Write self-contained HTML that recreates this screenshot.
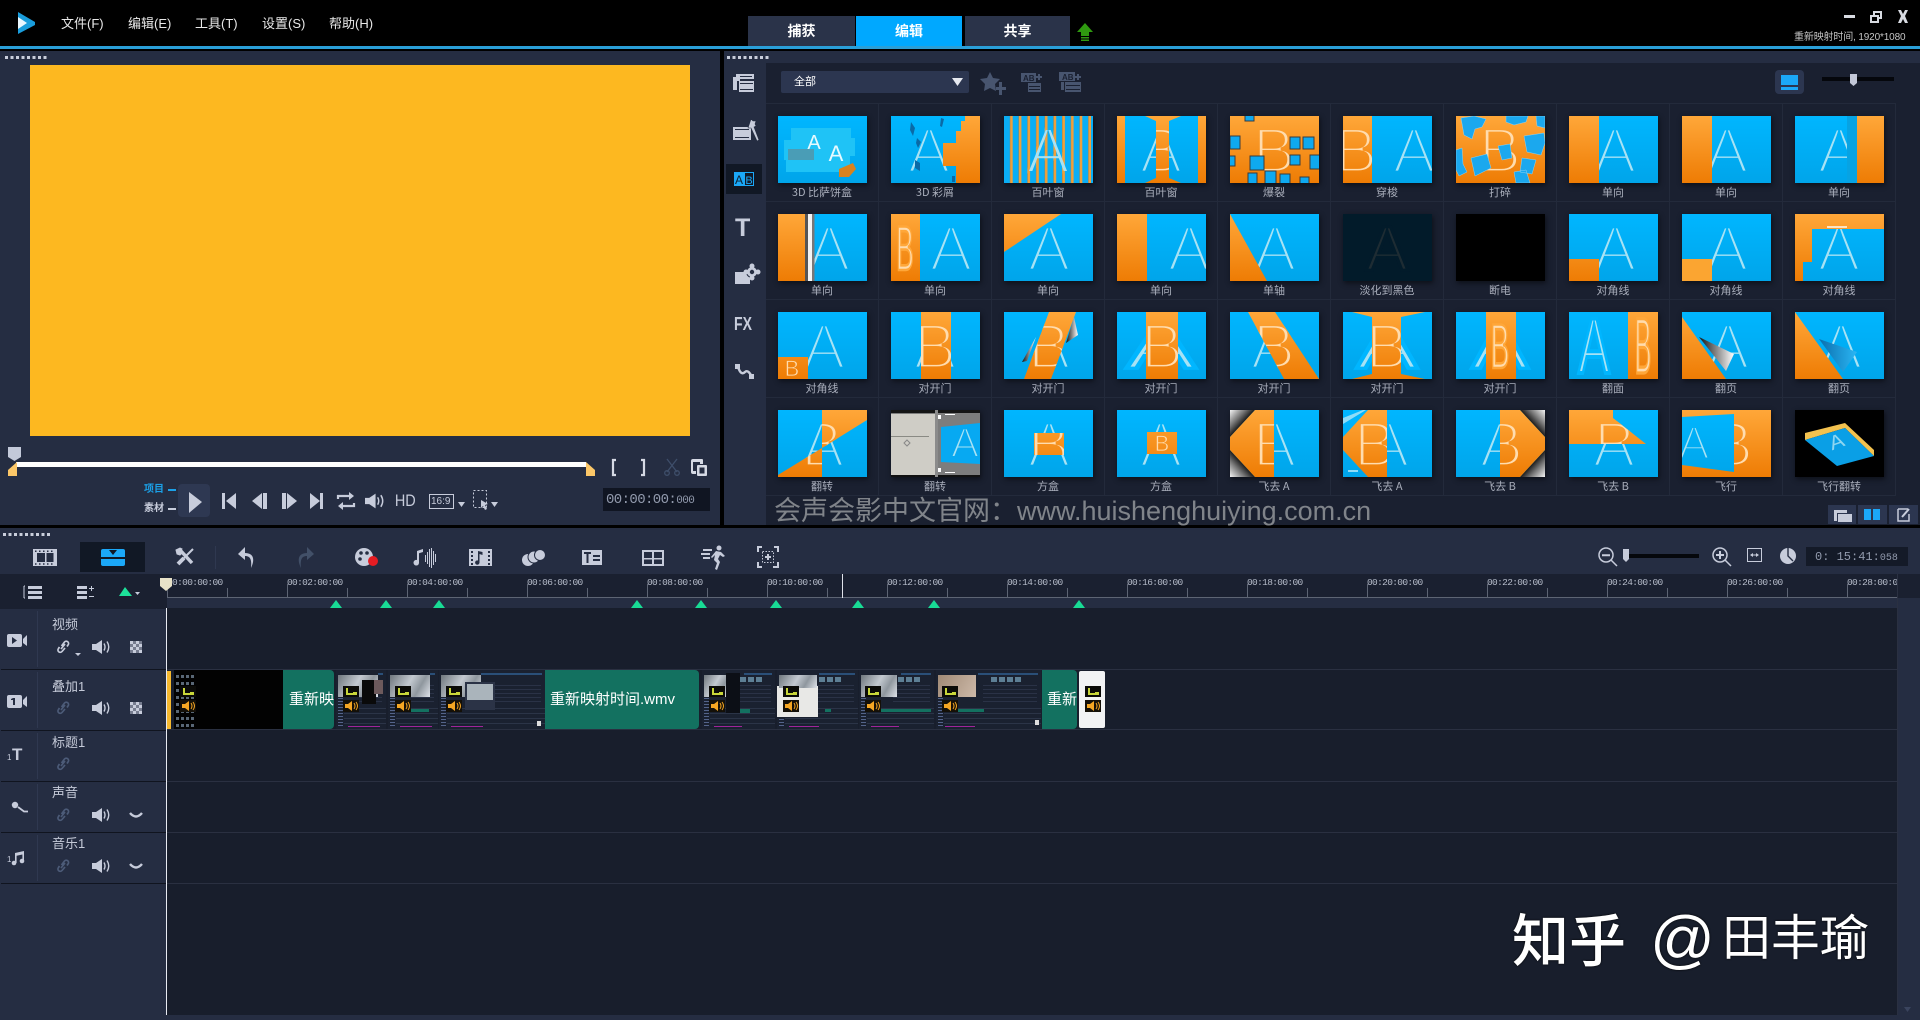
<!DOCTYPE html>
<html lang="zh"><head><meta charset="utf-8"><title>会声会影</title>
<style>
html,body{margin:0;padding:0;width:1920px;height:1020px;overflow:hidden;background:#000}
body{position:relative;font-family:"Liberation Sans","Noto Sans CJK SC",sans-serif;color:#c7ccdb}
div,span,p{position:absolute;margin:0;white-space:nowrap}
.p{background:#252d42}
.tab{top:16px;height:30px;line-height:30px;text-align:center;color:#fff;font-size:14px;font-weight:700;background:#2a3349}
.m{top:15px;font-size:13px;line-height:18px;color:#e8e8e8}
.dots{height:3px;background:repeating-linear-gradient(90deg,#c9cedb 0 3px,transparent 3px 5.5px)}
#grid{left:766px;top:103px;width:1130px;display:grid;grid-template-columns:repeat(10,113px);grid-auto-rows:98px;border-top:1px solid #232a3b}
.c{position:relative;border-right:1px solid #232a3b;border-bottom:1px solid #232a3b;box-sizing:border-box}
.c svg{position:absolute;left:12px;top:12px;width:89px;height:67px;box-shadow:1px 2px 5px #0c0f17}
.c p{left:0;right:0;top:81px;text-align:center;font:11px/14px "WenQuanYi Zen Hei","Noto Sans CJK SC",sans-serif;color:#a9aebb}
.B,.O{width:89px;height:67px}
.B{fill:url(#gb)}.O{fill:url(#go)}
.a,.b{font:63px "Liberation Sans",sans-serif;text-anchor:middle;stroke-width:3.2}
.a{fill:#a8e2f4;stroke:url(#gb)}
.b{fill:#ffdcae;stroke:url(#go)}
.q{fill:#0ea9f0;stroke:#3b3b3b;stroke-width:1}
.sh{fill:#1ba8ee;stroke:#8fd3f2;stroke-width:.5}
.tk{font:9.5px "Liberation Mono",monospace;letter-spacing:-.65px;color:#b4bac8;top:3px}
.h{left:1px;width:165px;background:#252d42;border-bottom:1px solid #10141f;box-sizing:border-box}
.h i{position:absolute;left:36px;top:2px;bottom:2px;width:1px;background:#2f3850}
.n{font-size:13px;line-height:16px;color:#c5cad8;left:52px}
.sep{left:167px;width:1730px;height:1px;background:#2a3041}
.s{top:670px;height:59px;background:#1a2130;overflow:hidden}
.s b{position:absolute;display:block}
.ph{left:2px;top:5px;width:40px;height:22px;background:linear-gradient(120deg,#6f777d,#c3c9d0 45%,#8f979e 70%,#dfe3ea)}
.ui{left:42px;top:3px;right:3px;height:2px;background:#2a4f78}
.pu{left:12px;top:56px;width:32px;height:1px;background:#a0249a}
.cb{left:7px;top:16px}
.lp{left:2px;top:28px;width:5px;height:28px;background:repeating-linear-gradient(0deg,#54648a 0 1px,transparent 1px 3px)}
.tl{left:8px;top:36px;right:0;height:18px;background:repeating-linear-gradient(0deg,#2b3447 0 1px,transparent 1px 5px)}
.tp{left:52%;top:7px;width:30%;height:5px;background:repeating-linear-gradient(90deg,#5d7f95 0 6px,transparent 6px 8px)}
.rp{left:45%;top:14px;right:4px;height:18px;background:repeating-linear-gradient(0deg,#2a3246 0 1px,transparent 1px 4px)}
.g{top:670px;height:59px;background:#137160;color:#fff;font-size:15px;line-height:59px;border-radius:0 4px 4px 0;overflow:hidden}
.lc{font-family:"Liberation Mono",monospace;color:#929aad}
</style></head><body>
<svg width="0" height="0" style="position:absolute"><defs>
<linearGradient id="gb" gradientUnits="userSpaceOnUse" x1="0" y1="0" x2="0" y2="67"><stop offset="0" stop-color="#00b6ff"/><stop offset="1" stop-color="#00a5ea"/></linearGradient>
<linearGradient id="go" gradientUnits="userSpaceOnUse" x1="0" y1="0" x2="0" y2="67"><stop offset="0" stop-color="#ffa739"/><stop offset="1" stop-color="#ee7c04"/></linearGradient>
<linearGradient id="fold" x1="0" y1="0" x2="1" y2="0"><stop offset="0" stop-color="#111"/><stop offset="1" stop-color="#fff"/></linearGradient>
<linearGradient id="fb" x1="0" y1="0" x2="1" y2="0"><stop offset="0" stop-color="#0a6fae"/><stop offset="1" stop-color="#2bb6f4"/></linearGradient>
<linearGradient id="gc" x1="0" y1="0" x2=".55" y2=".55"><stop offset="0" stop-color="#f4f4f4"/><stop offset=".55" stop-color="#777"/><stop offset="1" stop-color="#050505"/></linearGradient>
<pattern id="st" patternUnits="userSpaceOnUse" width="8.7" height="67"><rect width="6" height="67" fill="#0aaef5"/><rect x="6" width="2.7" height="67" fill="#f0a03a"/></pattern>
<clipPath id="L30"><rect width="30" height="67"/></clipPath>
<clipPath id="M30"><rect x="30" width="30" height="67"/></clipPath>
<clipPath id="R59"><rect x="59" width="30" height="67"/></clipPath>
<symbol id="spk" viewBox="0 0 18 14"><path d="M0 4h4l6-4v14l-6-4H0z"/><path d="M12 3.500q2 3.500 0 7M15 1.500q3.500 5.500 0 11" fill="none" stroke="currentColor" stroke-width="1.400"/></symbol>
<symbol id="lnk" viewBox="0 0 14 14"><path d="M5 9l4-5M3.500 7l-1 1.500a2.200 2.200 0 0 0 3.500 3L9 8M5.500 6L8.500 2a2.200 2.200 0 0 1 3.500 3l-1 1.500" fill="none" stroke="currentColor" stroke-width="1.700"/></symbol>
<symbol id="chk" viewBox="0 0 12 12"><path d="M0 0h3v3H0zM6 0h3v3H6zM3 3h3v3H3zM9 3h3v3H9zM0 6h3v3H0zM6 6h3v3H6zM3 9h3v3H3zM9 9h3v3H9z"/><path opacity=".5" d="M3 0h3v3H3zM9 0h3v3H9zM0 3h3v3H0zM6 3h3v3H6zM3 6h3v3H3zM9 6h3v3H9zM0 9h3v3H0zM6 9h3v3H6z"/></symbol>
<symbol id="cbx" viewBox="0 0 16 27"><rect width="16" height="11" fill="#0b0b08"/><rect y="14" width="16" height="12" fill="#141008"/><path d="M3 2h2v5h6v2H3zM10 6h4v3h-4z" fill="#c8d63a"/><path d="M2 18h3l4-3v10l-4-3H2z" fill="#f5a623"/><path d="M11 17q2 3 0 6M13 16q3 4 0 8" fill="none" stroke="#f5a623"/></symbol>
</defs></svg>

<!-- top bar -->
<svg style="position:absolute;left:18px;top:12px" width="18" height="22"><path d="M0 0l17 10v3L0 22z" fill="#1a9ddc"/><path d="M0 5l9 6-9 6z" fill="#eaf7ff"/></svg>
<span class="m" style="left:61px">文件(F)</span><span class="m" style="left:128px">编辑(E)</span><span class="m" style="left:195px">工具(T)</span><span class="m" style="left:262px">设置(S)</span><span class="m" style="left:329px">帮助(H)</span>
<div class="tab" style="left:748px;width:107px">捕获</div>
<div class="tab" style="left:856px;width:106px;background:#00a8ff">编辑</div>
<div class="tab" style="left:965px;width:105px">共享</div>
<svg style="position:absolute;left:1076px;top:23px" width="18" height="18"><path d="M9 0l8 9h-4v4H5V9H1z" fill="#2f9a10"/><path d="M5 14h8v1.500H5zM5 16.500h8V18H5z" fill="#2f9a10"/></svg>
<svg style="position:absolute;left:1844px;top:8px" width="68" height="16" fill="#d8dbe2"><rect x="0" y="7" width="11" height="3"/><path d="M29 3h9v8h-3v4h-9V7h3zM31 5v2h4v2h1V5zM28 9v4h5V9z" fill-rule="evenodd"/><path d="M54 2h3l2 4 2-4h3l-3 6 3 7h-3l-2-4-2 4h-3l3-7z"/></svg>
<span style="left:1794px;top:31px;font-size:10px;line-height:14px;letter-spacing:-.15px;color:#c4c4c4">重新映射时间, 1920*1080</span>
<div style="left:0;top:46px;width:1920px;height:2.500px;background:#2a9fd8"></div>

<!-- preview panel -->
<div class="p" style="left:0;top:51px;width:720px;height:474px"></div>
<div class="dots" style="left:5px;top:56px;width:44px"></div>
<div style="left:30px;top:65px;width:660px;height:371px;background:#fdb820"></div>
<div style="left:16px;top:462px;width:570px;height:5px;background:#fff"></div>
<svg style="position:absolute;left:0;top:440px" width="720" height="85">
<path d="M8 7h13v10l-6.500 4L8 17z" fill="#c3c9d9"/>
<path d="M17 22v14H8v-6zM586 22v14h9v-6z" fill="#fcc768"/>
<g fill="none" stroke="#d5d9e4" stroke-width="2.200"><path d="M616 20h-3v15h3M641 20h3v15h-3"/></g>
<g stroke="#3e4e6a" stroke-width="1.300" fill="none"><path d="M667 19l10 13M677 19l-10 13"/><circle cx="667" cy="33" r="2.300"/><circle cx="677" cy="33" r="2.300"/></g>
<path d="M693 19h9a1 1 0 0 1 1 1v4h-3v-2h-7v9h3v3h-3a2 2 0 0 1-2-2V21a2 2 0 0 1 2-2z" fill="#d5d9e4"/><rect x="697" y="25" width="10" height="11" rx="1" fill="#d5d9e4"/><rect x="699.500" y="27.500" width="5" height="6" fill="#252d42"/>
<rect x="168" y="49" width="8" height="2" fill="#1ba1e8"/><rect x="168" y="68" width="8" height="2" fill="#c7ccdb"/>
<rect x="178" y="44" width="32" height="33" rx="4" fill="#2e3852"/>
<path d="M189 52l13 10-13 11z" fill="#c7ccdb"/>
<g fill="#c7ccdb"><path d="M222 53h3v16h-3zM236 53v16l-10-8zM252 61l10-8v16zM263 53h4v16h-4zM282 53h4v16h-4zM287 53l10 8-10 8zM310 53l10 8-10 8zM320 53h3v16h-3z"/></g>
<g fill="none" stroke="#c7ccdb" stroke-width="2.200"><path d="M338 59v-3h12M354 63v3h-12"/></g><path d="M349 52l5 4-5 4zM343 62l-5 4 5 4z" fill="#c7ccdb"/>
<use href="#spk" x="365" y="53" width="19" height="16" fill="#c7ccdb" color="#c7ccdb"/>
<rect x="429.500" y="54.500" width="24" height="14" fill="none" stroke="#c7ccdb"/>
<path d="M458 62h7l-3.500 5zM491 62h7l-3.500 5z" fill="#c7ccdb"/>
<rect x="473.500" y="50.500" width="13" height="17" fill="none" stroke="#c7ccdb" stroke-dasharray="2 2"/><path d="M481 60l7 4-3 1 2 4-2 1-2-4-2 2z" fill="#c7ccdb"/>
<path d="M703 52l5 6h-10zM703 71l5-6h-10z" fill="#d5d9e4"/>
</svg>
<span style="left:144px;top:483px;font-size:10px;line-height:14px;font-weight:700;color:#1ba1e8">项目</span>
<span style="left:144px;top:502px;font-size:10px;line-height:14px;font-weight:700;color:#c7ccdb">素材</span>
<span style="left:393px;top:491px;font-size:17px;line-height:20px;color:#c7ccdb;transform:scaleX(.85)">HD</span>
<span style="left:431px;top:495px;font-size:10px;line-height:13px;color:#c7ccdb">16:9</span>
<div style="left:603px;top:488px;width:107px;height:23px;background:#101522"></div>
<span class="lc" style="left:606px;top:491px;font-size:14px;line-height:18px;letter-spacing:-.6px">00:00:00:<span style="position:static;font-size:11px">000</span></span>

<!-- library panel -->
<div class="p" style="left:724px;top:51px;width:1196px;height:474px"></div>
<div style="left:766px;top:63px;width:1154px;height:462px;background:#1a2030"></div>
<div class="dots" style="left:727px;top:56px;width:44px"></div>
<div style="left:781px;top:71px;width:188px;height:22px;background:#2c3650;border-radius:2px"></div>
<span style="left:794px;top:75px;font-size:11px;line-height:14px;color:#fff">全部</span>
<svg style="position:absolute;left:724px;top:63px" width="1196" height="40">
<path d="M228 15h11l-5.500 8z" fill="#e6e9f0"/>
<g fill="#48556f" transform="translate(-4 4)"><path d="M270 5l3 6 7 1-5 5 1 7-6-3-6 3 1-7-5-5 7-1z"/><path d="M276 20h3v-5h3v5h4v3h-4v5h-3v-5h-3z"/></g>
<g fill="#48556f"><rect x="297" y="10" width="15" height="9"/><rect x="304" y="20" width="13" height="9"/><path d="M314 11h2v2h2v2h-2v2h-2v-2h-2v-2h2z"/><rect x="335" y="9" width="16" height="9"/><rect x="337" y="19" width="3" height="8"/><rect x="341" y="19" width="16" height="10"/><path d="M353 11h2v2h2v2h-2v2h-2v-2h-2v-2h2z"/></g>
<g fill="#1a2030"><rect x="305" y="23" width="11" height="1"/><rect x="305" y="26" width="11" height="1"/><rect x="342" y="22" width="14" height="1"/><rect x="342" y="26" width="14" height="1"/></g>
<text x="299" y="18" font-family="Liberation Sans" font-size="8" font-weight="700" fill="#1a2030">AB</text><text x="338" y="17" font-family="Liberation Sans" font-size="8" font-weight="700" fill="#1a2030">AB</text>
<rect x="1051" y="7" width="29" height="24" rx="4" fill="#2c3650"/><rect x="1057" y="12" width="17" height="10" fill="#1ba8f8"/><rect x="1057" y="24" width="17" height="3" fill="#1ba8f8"/>
<rect x="1098" y="14" width="72" height="4" fill="#05070c"/><path d="M1126 11h7v9l-3.500 3-3.500-3z" fill="#c3c8d8"/>
<rect x="1181" y="40" width="7" height="122" fill="#2c3650"/>
</svg>
<svg style="position:absolute;left:724px;top:64px" width="42" height="330" fill="#c7ccdb">
<path d="M12 10h18v5H16v2h-3v9H9V13h3z"/><rect x="15" y="17" width="15" height="11"/><g fill="#252d42"><rect x="16" y="19" width="13" height="1"/><rect x="16" y="25" width="13" height="1"/><rect x="16" y="12" width="12" height="1"/></g>
<rect x="9" y="63" width="18" height="13"/><g fill="#252d42"><rect x="11" y="65" width="14" height="1"/><rect x="11" y="73" width="14" height="1"/></g><path d="M26 58l1-3 2 2 3 0-1 3 1 2-2 1 5 13-2 1-6-13-3 0 1-3z" stroke="#252d42" stroke-width=".6"/>
<rect x="2" y="100" width="36" height="30" fill="#111825"/><rect x="10" y="108" width="10" height="14" fill="#1ba8f8"/><rect x="20.500" y="108.500" width="9" height="13" fill="none" stroke="#1ba8f8"/>
<text x="15" y="120" text-anchor="middle" font-family="Liberation Sans" font-size="12" fill="#0c2030">A</text><text x="25" y="120" text-anchor="middle" font-family="Liberation Sans" font-size="11" fill="#1ba8f8">B</text>
<rect x="11" y="208" width="15" height="12"/><circle cx="28" cy="208" r="5.500" stroke="#252d42"/><g><circle cx="28" cy="202" r="2.500"/><circle cx="34" cy="208" r="2.500"/><circle cx="28" cy="214" r="2.500"/><circle cx="22" cy="208" r="2.500"/></g><circle cx="28" cy="208" r="2.200" fill="#252d42"/>
<path d="M14 303q3 9 7 5q3-3 7 5" fill="none" stroke="#c7ccdb" stroke-width="2.400"/><rect x="11" y="300" width="5" height="5"/><rect x="25" y="310" width="5" height="5"/>
</svg>
<span style="left:735px;top:215px;font-size:25px;line-height:26px;font-weight:700;color:#c7ccdb">T</span>
<span style="left:734px;top:314px;font-size:18px;line-height:20px;font-weight:700;color:#c7ccdb;transform:scaleX(.78);transform-origin:0 0">FX</span>

<div id="grid">
<div class="c"><svg viewBox="0 0 89 67"><rect class="B"/><path fill="#1fc3f6" d="M13 12h60v10h4v18h-5v16H8V44H6V24h7z"/><rect x="10" y="33" width="26" height="11" fill="#4a9db6"/><path fill="#d9821c" d="M61 53l14-6 3 6-7 8H61z"/><text x="36" y="33" style="font:20px 'Liberation Sans',sans-serif;fill:#e6faff;text-anchor:middle">A</text><text x="58" y="45" style="font:22px 'Liberation Sans',sans-serif;fill:#e6faff;text-anchor:middle">A</text></svg><p>3D 比萨饼盒</p></div>
<div class="c"><svg viewBox="0 0 89 67"><rect class="B"/><text class="a" x="38" y="56">A</text><clipPath id="c2"><path d="M74 0h15v67H65V50H52V27h13V15h5V5h4z"/></clipPath><g clip-path="url(#c2)"><rect class="O"/></g><path fill="#0a6aa6" d="M20 6l4 6-2 8-3-6zM50 2l3 1-2 8-2-1zM26 22l4 4-3 6-2-5zM24 44l5 3v8l-5-3zM61 60h3v6h-3z"/></svg><p>3D 彩屑</p></div>
<div class="c"><svg viewBox="0 0 89 67"><rect width="89" height="67" fill="url(#st)"/><text class="a" x="44" y="56" style="stroke:url(#st);stroke-width:2.500">A</text></svg><p>百叶窗</p></div>
<div class="c"><svg viewBox="0 0 89 67"><rect class="B"/><text class="a" x="44" y="56">A</text><clipPath id="c4"><path d="M0 0h8v67H0zM81 0h8v67h-8zM28 0h36L52 5v57l12 5H28l11-5V5z"/></clipPath><g clip-path="url(#c4)"><rect class="O"/><text class="b" x="44" y="56">B</text></g></svg><p>百叶窗</p></div>
<div class="c"><svg viewBox="0 0 89 67"><rect class="O"/><text class="b" x="44" y="56">B</text><rect class="q" x="15" y="-1" width="9" height="6"/><rect class="q" x="0" y="20" width="10" height="13"/><rect class="q" x="-1" y="40" width="6" height="10"/><rect class="q" x="20" y="40" width="14" height="14"/><rect class="q" x="60" y="21" width="10" height="12"/><rect class="q" x="73" y="21" width="11" height="12"/><rect class="q" x="60" y="39" width="10" height="10"/><rect class="q" x="80" y="39" width="10" height="14"/><rect class="q" x="18" y="57" width="9" height="11"/><rect class="q" x="35" y="55" width="11" height="13"/><rect class="q" x="50" y="58" width="10" height="10"/><rect class="q" x="70" y="61" width="9" height="7"/></svg><p>爆裂</p></div>
<div class="c"><svg viewBox="0 0 89 67"><rect class="B"/><text class="a" x="71" y="56">A</text><clipPath id="c6"><rect width="29" height="67"/></clipPath><g clip-path="url(#c6)"><rect class="O"/><text class="b" x="13" y="56">B</text></g></svg><p>穿梭</p></div>
<div class="c"><svg viewBox="0 0 89 67"><rect class="O"/><text class="b" x="44" y="56">B</text><path class="sh" d="M5 2l13-2 12 3-4 8-7 2-3 10-8-4zM50 0h22l-2 6-12 3-8-3zM68 20l20-3 1 10-4 12-14-3zM0 34l6-2 1 16 4 8-8 4-3-6zM15 42l16-4 4 14-16 8zM66 42l14 2-4 14-12-2zM58 56l12-2 4 13H60zM42 30l12-2 2 14-10 2zM80 0h9v12l-8-2z"/></svg><p>打碎</p></div>
<div class="c"><svg viewBox="0 0 89 67"><rect class="B"/><text class="a" x="46" y="56">A</text><rect class="O" style="width:30px"/></svg><p>单向</p></div>
<div class="c"><svg viewBox="0 0 89 67"><rect class="B"/><text class="a" x="45" y="56">A</text><rect class="O" style="width:30px"/></svg><p>单向</p></div>
<div class="c"><svg viewBox="0 0 89 67"><rect class="B"/><text class="a" x="44" y="56">A</text><rect x="52" width="10" height="67" fill="#07a3e3"/><rect class="O" x="62" style="width:27px"/></svg><p>单向</p></div>

<div class="c"><svg viewBox="0 0 89 67"><rect class="B"/><text class="a" x="51" y="56">A</text><rect class="O" style="width:27px"/><rect x="27" width="3" height="67" fill="#555"/><rect x="30" width="4" height="67" fill="#f4f4f4"/><rect x="34" width="2.500" height="67" fill="#777"/></svg><p>单向</p></div>
<div class="c"><svg viewBox="0 0 89 67"><rect class="B"/><text class="a" x="60" y="56">A</text><rect class="O" style="width:29px"/><text class="b" transform="translate(14 56) scale(.42 1)" style="stroke-width:2.600">B</text></svg><p>单向</p></div>
<div class="c"><svg viewBox="0 0 89 67"><rect class="B"/><text class="a" x="45" y="56">A</text><path class="O" d="M0 0h57L0 38z"/></svg><p>单向</p></div>
<div class="c"><svg viewBox="0 0 89 67"><rect class="B"/><text class="a" x="72" y="56">A</text><rect class="O" style="width:30px"/></svg><p>单向</p></div>
<div class="c"><svg viewBox="0 0 89 67"><rect class="B"/><text class="a" x="45" y="56">A</text><path class="O" d="M0 0l37 67H0z"/></svg><p>单轴</p></div>
<div class="c"><svg viewBox="0 0 89 67"><rect width="89" height="67" fill="#021b2a"/><text class="a" x="44" y="56" style="fill:#1e2c33;stroke:#021b2a">A</text></svg><p>淡化到黑色</p></div>
<div class="c"><svg viewBox="0 0 89 67"><rect width="89" height="67" fill="#000"/></svg><p>断电</p></div>
<div class="c"><svg viewBox="0 0 89 67"><rect class="B"/><text class="a" x="46" y="56">A</text><rect class="O" y="45" style="width:30px;height:22px"/></svg><p>对角线</p></div>
<div class="c"><svg viewBox="0 0 89 67"><rect class="B"/><text class="a" x="45" y="56">A</text><rect x="0" y="45" width="30" height="22" fill="#fba531"/></svg><p>对角线</p></div>
<div class="c"><svg viewBox="0 0 89 67"><rect class="B"/><text class="a" x="44" y="56">A</text><path class="O" d="M0 0h89v15H17v33H8v19H0z"/><rect x="32" y="12" width="20" height="2" fill="#ffe3c0"/></svg><p>对角线</p></div>

<div class="c"><svg viewBox="0 0 89 67"><rect class="B"/><text class="a" x="46" y="56">A</text><rect class="O" y="45" style="width:30px;height:22px"/><text class="b" x="14" y="64" style="font-size:22px;stroke-width:.7">B</text></svg><p>对角线</p></div>
<div class="c"><svg viewBox="0 0 89 67"><rect class="B"/><text class="a" x="44" y="56">A</text><g clip-path="url(#M30)"><rect class="O"/><text class="b" x="44" y="56">B</text></g></svg><p>对开门</p></div>
<div class="c"><svg viewBox="0 0 89 67"><rect class="B"/><text class="a" x="45" y="56">A</text><clipPath id="c23"><path d="M45 0h27L47 67H20z"/></clipPath><g clip-path="url(#c23)"><rect class="O"/><text class="b" x="45" y="56">B</text></g><path d="M18 50l14-25-9 24z" fill="url(#fold)"/><path d="M70 5l4 18-12 8z" fill="url(#fold)"/></svg><p>对开门</p></div>
<div class="c"><svg viewBox="0 0 89 67"><rect class="B"/><text class="a" transform="translate(44 56) scale(1.650 1)">A</text><clipPath id="c24"><rect x="29" width="32" height="67"/></clipPath><g clip-path="url(#c24)"><rect class="O"/><text class="b" x="45" y="56">B</text></g></svg><p>对开门</p></div>
<div class="c"><svg viewBox="0 0 89 67"><rect class="B"/><text class="a" x="42" y="56">A</text><clipPath id="c25"><path d="M18 0h27l44 67H54z"/></clipPath><g clip-path="url(#c25)"><rect class="O"/><text class="b" x="44" y="56">B</text></g></svg><p>对开门</p></div>
<div class="c"><svg viewBox="0 0 89 67"><rect class="B"/><text class="a" transform="translate(44 56) scale(1.450 1)">A</text><clipPath id="c26"><path d="M9 0h73L58 5v57l24 5H9l20-5V5z"/></clipPath><g clip-path="url(#c26)"><rect class="O"/><text class="b" x="44" y="56">B</text></g></svg><p>对开门</p></div>
<div class="c"><svg viewBox="0 0 89 67"><rect class="B"/><text class="a" transform="translate(44 56) scale(1.350 1)">A</text><rect class="O" x="30" style="width:30px"/><text class="b" transform="translate(44 56) scale(.45 1)" style="stroke-width:2.600">B</text></svg><p>对开门</p></div>
<div class="c"><svg viewBox="0 0 89 67"><rect class="B"/><text class="a" transform="translate(25 61) scale(.75 1.250)">A</text><g clip-path="url(#R59)"><rect class="O"/><text class="b" transform="translate(74 61) scale(.4 1.250)" style="stroke-width:2.600">B</text></g></svg><p>翻面</p></div>
<div class="c"><svg viewBox="0 0 89 67"><rect class="B"/><text class="a" x="46" y="56">A</text><path class="O" d="M0 5l44 62H0z"/><path d="M17 25l35 17-8 17z" fill="url(#fold)"/></svg><p>翻页</p></div>
<div class="c"><svg viewBox="0 0 89 67"><rect class="B"/><text class="a" x="46" y="56">A</text><path class="O" d="M0 0l48 67H0z"/><path d="M24 27l38 13-14 20z" fill="url(#fb)"/></svg><p>翻页</p></div>

<div class="c"><svg viewBox="0 0 89 67"><rect class="B"/><text class="a" x="45" y="56">A</text><clipPath id="c31"><path d="M44 0h45v10L44 38V67H0V65L44 38z"/></clipPath><g clip-path="url(#c31)"><rect class="O"/><text class="b" x="44" y="56">B</text></g></svg><p>翻转</p></div>
<div class="c"><svg viewBox="0 0 89 67"><rect width="89" height="67" fill="#7d7d7d"/><rect width="89" height="3" fill="#151515"/><rect y="4" width="44" height="61" fill="#cfcdc6"/><rect y="65" width="89" height="2" fill="#111"/><rect y="26" width="38" height="1" fill="#8a8a84"/><path d="M16 30l3 3-3 3-3-3z" fill="none" stroke="#888"/><rect x="44" width="3" height="67" fill="#8b8b8b"/><path d="M50 17l39-4v41l-39-2z" fill="#07a9f2"/><text class="a" x="74" y="47" style="font-size:42px;stroke-width:2;stroke:#07a9f2">A</text><path d="M47 5h3v4h-3zM54 4h10v1H54zM47 58h3v4h-3zM54 62h10v1H54z" fill="#fff"/></svg><p>翻转</p></div>
<div class="c"><svg viewBox="0 0 89 67"><rect class="B"/><text class="a" x="45" y="56">A</text><clipPath id="c33"><rect x="30" y="23" width="30" height="22"/></clipPath><g clip-path="url(#c33)"><rect class="O"/><text class="b" x="45" y="56">B</text></g></svg><p>方盒</p></div>
<div class="c"><svg viewBox="0 0 89 67"><rect class="B"/><text class="a" x="44" y="56">A</text><rect class="O" x="30" y="22" style="width:30px;height:22px"/><text class="b" x="45" y="41" style="font-size:22px;stroke-width:.7">B</text></svg><p>方盒</p></div>
<div class="c"><svg viewBox="0 0 89 67"><rect class="B"/><text class="a" x="45" y="56">A</text><path d="M0 0h25L0 27z" fill="url(#gc)"/><path d="M0 0h25L0 27z" fill="url(#gc)" transform="translate(0 67) scale(1 -1)"/><clipPath id="c35"><path d="M25 0h19v67H25L0 40V27z"/></clipPath><g clip-path="url(#c35)"><rect class="O"/><text class="b" x="44" y="56">B</text></g></svg><p>飞去 A</p></div>
<div class="c"><svg viewBox="0 0 89 67"><rect class="B"/><text class="a" x="45" y="56">A</text><path d="M0 8l20-8h3L0 14zM5 60h10v2H5z" fill="#8fdcf7"/><clipPath id="c36"><path d="M25 0h19v67H25L0 40V27z"/></clipPath><g clip-path="url(#c36)"><rect class="O"/><text class="b" x="32" y="56">B</text></g></svg><p>飞去 A</p></div>
<div class="c"><svg viewBox="0 0 89 67"><rect class="B"/><text class="a" x="45" y="56">A</text><path d="M0 0h25L0 27z" fill="url(#gc)" transform="translate(89 0) scale(-1 1)"/><path d="M0 0h25L0 27z" fill="url(#gc)" transform="translate(89 67) scale(-1 -1)"/><clipPath id="c37"><path d="M44 0h20l25 27v13L64 67H44z"/></clipPath><g clip-path="url(#c37)"><rect class="O"/><text class="b" x="46" y="56">B</text></g></svg><p>飞去 B</p></div>
<div class="c"><svg viewBox="0 0 89 67"><rect class="B"/><text class="a" x="45" y="56">A</text><clipPath id="c38"><path d="M0 0h44v8l33 26H0z"/></clipPath><g clip-path="url(#c38)"><rect class="O"/><text class="b" x="46" y="56">B</text></g></svg><p>飞去 B</p></div>
<div class="c"><svg viewBox="0 0 89 67"><rect class="O"/><text class="b" x="50" y="56">B</text><path class="B" d="M0 7l52-3v58L0 55z"/><text class="a" x="12" y="49" style="font-size:46px;stroke-width:2.400">A</text></svg><p>飞行</p></div>
<div class="c"><svg viewBox="0 0 89 67"><rect width="89" height="67" fill="#000"/><path d="M10 23l40-10 29 27v6L50 18 10 30z" fill="#f3c24f"/><path d="M10 30l40-12 29 28-37 10z" fill="#0a9fe6"/><text x="44" y="42" transform="rotate(-20 44 38) scale(1 .9)" style="font:22px 'Liberation Sans',sans-serif;fill:#8fd6f0;text-anchor:middle">A</text></svg><p>飞行翻转</p></div>
</div>

<span style="left:774px;top:496px;height:30px;overflow:hidden;font-size:27px;line-height:30px;color:#80848a">会声会影中文官网：www.huishenghuiying.com.cn</span>
<div style="left:1828px;top:505px;width:28px;height:19px;background:#2c3650"></div>
<div style="left:1858px;top:505px;width:29px;height:19px;background:#2c3650"></div>
<div style="left:1889px;top:505px;width:29px;height:19px;background:#2c3650"></div>
<svg style="position:absolute;left:1828px;top:505px" width="92" height="20"><path d="M6 5h13v3H9v8H6z" fill="#c7ccdb"/><rect x="10" y="9" width="14" height="8" fill="#c7ccdb"/><rect x="36" y="4" width="7" height="11" fill="#1ba8f8"/><rect x="45" y="4" width="7" height="11" fill="#1ba8f8"/><path d="M70 4h10M70 4v12h11V9" fill="none" stroke="#c7ccdb" stroke-width="1.500"/><path d="M74 12l7-8" stroke="#c7ccdb" stroke-width="2"/></svg>

<!-- timeline panel -->
<div class="p" style="left:0;top:528px;width:1920px;height:492px"></div>
<div class="dots" style="left:3px;top:533px;width:47px"></div>
<div style="left:80px;top:542px;width:65px;height:30px;background:#111825"></div>
<svg style="position:absolute;left:0;top:540px" width="800" height="34" fill="#c7ccdb">
<path d="M33 9h24v17H33zM37 13v9h8V13zM46.500 13v9h7V13z" fill-rule="evenodd"/><g fill="#252d42"><path d="M35 10.500h1.500v1.500H35zM39 10.500h1.500v1.500H39zM43 10.500h1.500v1.500H43zM47 10.500h1.500v1.500H47zM51 10.500h1.500v1.500H51zM35 23.200h1.500v1.500H35zM39 23.200h1.500v1.500H39zM43 23.200h1.500v1.500H43zM47 23.200h1.500v1.500H47zM51 23.200h1.500v1.500H51z"/></g>
<rect x="101" y="9" width="24" height="17" rx="2" fill="#1ba8f8"/><rect x="101" y="17" width="24" height="2" fill="#111825"/><path d="M109 10h8l-4 5z" fill="#111825"/>
<g stroke="#c7ccdb" fill="none"><path d="M180 10l12 13" stroke-width="3.500"/><path d="M193 9l-9 9" stroke-width="2"/><path d="M184 18l-6 6" stroke-width="4"/><path d="M176 10l4-2 2 1-2 3 2 1-2 2-3-1z" stroke-width="1" fill="#c7ccdb"/></g>
<rect x="215" y="6" width="1" height="23" fill="#2f3850"/>
<path d="M245 7l-7 7 7 6v-4c5 0 7 3 6 12 4-8 3-15-6-15z"/>
<path d="M307 7l7 7-7 6v-4c-5 0-7 3-6 12-4-8-3-15 6-15z" fill="#425068"/>
<circle cx="364" cy="17" r="9"/><g fill="#252d42"><circle cx="361" cy="13" r="1.800"/><circle cx="367" cy="13" r="1.800"/><circle cx="360" cy="19" r="1.800"/></g><circle cx="373" cy="21" r="5" fill="#e51c23"/>
<path d="M417 20v-9l6-2v3l-4 1.300V22a2.800 2.800 0 1 1-2-2z"/><path d="M425 15h1v7h-1zM427 12h1v12h-1zM429 9h1v18h-1zM431 8h1v20h-1zM433 11h1v14h-1zM435 14h1v8h-1z"/>
<path d="M469 9h23v17h-23z"/><g fill="#252d42"><path d="M471 11h2v2h-2zM471 15h2v2h-2zM471 19h2v2h-2zM471 23h2v2h-2zM488 11h2v2h-2zM488 15h2v2h-2zM488 19h2v2h-2zM488 23h2v2h-2z"/><path d="M478 20.500a2.200 2.200 0 1 0 1.500 2V14l3 1v-3l-4.500-1z"/></g>
<circle cx="528" cy="20" r="6"/><circle cx="534" cy="17" r="6" stroke="#252d42"/><circle cx="540" cy="15" r="5.500" stroke="#252d42"/>
<rect x="582" y="10" width="20" height="15"/><path d="M584 12h7v2h-2.500v9h-2V14H584zM593 15h7v2h-7zM593 19h7v2h-7z" fill="#252d42"/>
<path d="M642 10h22v16h-22zM644 12v6h8v-6zM654 12v6h8v-6zM644 19.500v4.500h8v-4.500zM654 19.500v4.500h8v-4.500z" fill-rule="evenodd"/>
<path d="M703 9h9v2h-9zM701 13h9v2h-9zM703 17h7v2h-7z"/><circle cx="719" cy="8" r="2.500"/><path d="M716 11l5 1 4 4-2 1-3-2-2 4 2 3-3 8-2-1 2-6-3-3 1-5-3 3-1-1z"/>
<path d="M757 6h5v2h-3v4h-2zM779 6v6h-2V8h-3V6zM757 28v-6h2v4h3v2zM779 28h-6v-2h4v-4h2z"/><rect x="762.500" y="11.500" width="11" height="11" fill="none" stroke="#c7ccdb" stroke-dasharray="1.500 1.500"/><path d="M767 14h2v2h2v2h-2v2h-2v-2h-2v-2h2z"/>
</svg>
<svg style="position:absolute;left:1595px;top:545px" width="320" height="24"><g fill="none" stroke="#c7ccdb" stroke-width="1.500"><circle cx="11" cy="10" r="7"/><circle cx="125" cy="10" r="7"/><path d="M16 15l6 6M130 15l6 6"/></g><path d="M7 9.200h8v2H7zM121 9h8v2h-8zM124 6h2v8h-2z" fill="#c7ccdb"/><path d="M28 4h6v10l-3 3-3-3z" fill="#c7ccdb"/><rect x="34" y="9" width="70" height="4" fill="#05070c"/><rect x="152.500" y="3.500" width="14" height="13" fill="none" stroke="#c7ccdb"/><path d="M155 10l3-2v1.500h3V8l3 2-3 2v-1.500h-3V12z" fill="#c7ccdb"/><circle cx="193" cy="11" r="8" fill="#c7ccdb"/><path d="M193 3v8l5 5" fill="none" stroke="#252d42" stroke-width="1.400"/></svg>
<div style="left:1806px;top:547px;width:102px;height:19px;background:#141a28"></div>
<span class="lc" style="left:1815px;top:548px;font-size:12px;line-height:18px">0: 15:41:<span style="position:static;font-size:10px">058</span></span>

<!-- ruler -->
<div style="left:0;top:574px;width:1920px;height:24px;background:#1a2030"></div>
<div style="left:0;top:598px;width:167px;height:11px;background:#1a2030"></div>
<div id="r" style="left:167px;top:574px;width:1730px;height:24px;overflow:hidden">
<div style="left:0;right:0;bottom:1px;height:13px;background:repeating-linear-gradient(90deg,#5d6473 0 1px,transparent 1px 120px)"></div>
<div style="left:0;right:0;bottom:1px;height:9px;background:repeating-linear-gradient(90deg,transparent 0 60px,#5d6473 60px 61px,transparent 61px 120px)"></div>
<div style="left:0;right:0;bottom:0;height:1px;background:#5d6473"></div>
<span class="tk" style="left:0">00:00:00:00</span><span class="tk" style="left:120px">00:02:00:00</span><span class="tk" style="left:240px">00:04:00:00</span><span class="tk" style="left:360px">00:06:00:00</span><span class="tk" style="left:480px">00:08:00:00</span><span class="tk" style="left:600px">00:10:00:00</span><span class="tk" style="left:720px">00:12:00:00</span><span class="tk" style="left:840px">00:14:00:00</span><span class="tk" style="left:960px">00:16:00:00</span><span class="tk" style="left:1080px">00:18:00:00</span><span class="tk" style="left:1200px">00:20:00:00</span><span class="tk" style="left:1320px">00:22:00:00</span><span class="tk" style="left:1440px">00:24:00:00</span><span class="tk" style="left:1560px">00:26:00:00</span><span class="tk" style="left:1680px">00:28:00:00</span>
</div>
<div style="left:842px;top:574px;width:1px;height:24px;background:#dfe2ea"></div>
<svg style="position:absolute;left:0;top:574px" width="1100" height="36">
<g fill="#c7ccdb"><path d="M24 12v12M24 12h1M24 24h1" stroke="#c7ccdb" fill="none"/><rect x="28" y="12" width="14" height="3"/><rect x="28" y="17" width="14" height="3"/><rect x="28" y="22" width="14" height="3"/><rect x="77" y="12" width="10" height="3"/><rect x="77" y="17" width="10" height="3"/><rect x="77" y="22" width="10" height="3"/><path d="M89 14h2v-2h1v2h2v1h-2v2h-1v-2h-2zM89 22h5v1h-5z"/><path d="M135 18h5l-2.500 3z"/></g>
<path d="M119 22l6-9 7 9z" fill="#1de29a"/>
<g fill="#18dc95"><path d="M330 34l6-8 6 8zM380 34l6-8 6 8zM433 34l6-8 6 8zM631 34l6-8 6 8zM695 34l6-8 6 8zM770 34l6-8 6 8zM852 34l6-8 6 8zM928 34l6-8 6 8zM1073 34l6-8 6 8z"/></g>
<path d="M160 4h12v8l-6 5-6-5z" fill="#e8e2c8"/>
</svg>

<!-- tracks -->
<div style="left:167px;top:608px;width:1730px;height:407px;background:#181e2c"></div>
<div style="left:1897px;top:574px;width:1px;height:441px;background:#2a3041"></div>
<div class="sep" style="top:669px"></div><div class="sep" style="top:729px"></div><div class="sep" style="top:781px"></div><div class="sep" style="top:832px"></div><div class="sep" style="top:883px"></div>
<div class="h" style="top:609px;height:61px"><i></i></div>
<div class="h" style="top:670px;height:61px"><i></i></div>
<div class="h" style="top:731px;height:51px"><i></i></div>
<div class="h" style="top:782px;height:51px"><i></i></div>
<div class="h" style="top:833px;height:51px"><i></i></div>
<span class="n" style="top:617px">视频</span><span class="n" style="top:679px">叠加1</span><span class="n" style="top:735px">标题1</span><span class="n" style="top:785px">声音</span><span class="n" style="top:836px">音乐1</span>
<svg style="position:absolute;left:0;top:609px" width="166" height="275" color="#c7ccdb" fill="#c7ccdb">
<rect x="7" y="25" width="15" height="13" rx="2"/><path d="M12 28l5 3.500-5 3.500z" fill="#252d42"/><path d="M23 30l4-4v11l-4-3z"/>
<rect x="7" y="86" width="15" height="13" rx="2"/><path d="M13 89h2v7h-2zM11 90l2-1v2h-2z" fill="#252d42"/><path d="M23 91l4-4v11l-4-3z"/>
<circle cx="15" cy="196" r="3.200"/><path d="M18 198l6 4.500h4" fill="none" stroke="#c7ccdb" stroke-width="1.800"/>
<path d="M15 244l9-2v10h-1.600v-6.500l-5.800 1.300V254h-1.600z"/><circle cx="14" cy="254" r="2.300"/><circle cx="22" cy="252" r="2.300"/>
<use href="#lnk" x="56" y="31" width="14" height="14"/><path d="M75 44h6l-3 3z"/>
<g color="#4c5b78"><use href="#lnk" x="56" y="92" width="14" height="14"/><use href="#lnk" x="56" y="148" width="14" height="14"/><use href="#lnk" x="56" y="199" width="14" height="14"/><use href="#lnk" x="56" y="250" width="14" height="14"/></g>
<use href="#spk" x="92" y="31" width="18" height="14"/><use href="#spk" x="92" y="92" width="18" height="14"/><use href="#spk" x="92" y="199" width="18" height="14"/><use href="#spk" x="92" y="250" width="18" height="14"/>
<use href="#chk" x="130" y="32" width="12" height="12"/><use href="#chk" x="130" y="93" width="12" height="12"/>
<g fill="none" stroke="#c7ccdb" stroke-width="2.400"><path d="M130 204q6 7 12 0M130 255q6 7 12 0"/></g>
</svg>
<span style="left:7px;top:753px;font-size:8px;line-height:10px">1</span><span style="left:12px;top:745px;font-size:17px;line-height:20px;font-weight:700">T</span><span style="left:7px;top:855px;font-size:8px;line-height:10px">1</span>
<div style="left:166px;top:608px;width:1px;height:407px;background:#e8eaf2"></div>

<!-- clips -->
<div style="left:167px;top:671px;width:4px;height:58px;background:#f5b82e"></div>
<div class="s" style="left:174px;width:109px;background:#020202"><div style="left:2px;top:3px;width:20px;height:54px;background:repeating-linear-gradient(0deg,#7f92a8 0 3px,transparent 3px 7px);opacity:.7;-webkit-mask:repeating-linear-gradient(90deg,#000 0 3px,transparent 3px 5px)"></div><svg style="position:absolute;left:6px;top:16px" width="16" height="27"><use href="#cbx"/></svg></div>
<div class="g" style="left:283px;width:51px;padding-left:6px;box-sizing:border-box">重新映</div>
<div class="s" style="left:336px;width:50px"><b class="lp"></b><b class="tl"></b><b class="rp"></b><b class="ph"></b><b class="ui"></b><b class="pu"></b><b style="left:26px;top:10px;width:14px;height:24px;background:#0a0a0a"></b><b style="left:38px;top:10px;width:9px;height:14px;background:#6d5a5c"></b><svg style="position:absolute;left:7px;top:16px" width="16" height="27"><use href="#cbx"/></svg></div>
<div class="s" style="left:388px;width:50px"><b class="lp"></b><b class="tl"></b><b class="rp"></b><b class="ph"></b><b class="ui"></b><b class="pu"></b><b style="left:21px;top:39px;width:20px;height:3px;background:#137160"></b><svg style="position:absolute;left:7px;top:16px" width="16" height="27"><use href="#cbx"/></svg></div>
<div class="s" style="left:439px;width:106px"><b class="lp"></b><b class="tl"></b><b class="rp"></b><b class="ph"></b><b class="ui"></b><b class="pu"></b><b style="left:26px;top:12px;width:30px;height:28px;background:#2b3346"></b><b style="left:28px;top:14px;width:26px;height:16px;background:#aab4bb"></b><b style="left:98px;top:51px;width:4px;height:5px;background:#ddd"></b><svg style="position:absolute;left:7px;top:16px" width="16" height="27"><use href="#cbx"/></svg></div>
<div class="g" style="left:545px;width:154px;padding-left:5px;box-sizing:border-box">重新映射时间.wmv</div>
<div class="s" style="left:702px;width:73px"><b class="lp"></b><b class="tl"></b><b class="tp"></b><b class="rp"></b><b class="ph" style="width:24px"></b><b class="ui"></b><b class="pu" style="width:28px"></b><b style="left:36px;top:39px;width:12px;height:4px;background:#137160"></b><b style="left:24px;top:3px;width:14px;height:40px;background:#0c0f16"></b><svg style="position:absolute;left:7px;top:16px" width="16" height="27"><use href="#cbx"/></svg></div>
<div class="s" style="left:777px;width:81px"><b class="lp"></b><b class="tl"></b><b class="tp"></b><b class="rp"></b><b style="left:0;top:16px;width:41px;height:31px;background:#e8e8e6"></b><b class="ph" style="left:2px;top:5px;width:38px;height:13px"></b><b class="ui"></b><b class="pu" style="width:30px"></b><b style="left:48px;top:39px;width:6px;height:3px;background:#137160"></b><svg style="position:absolute;left:6px;top:16px" width="16" height="27"><use href="#cbx"/></svg></div>
<div class="s" style="left:859px;width:75px"><b class="lp"></b><b class="tl"></b><b class="tp"></b><b class="rp"></b><b class="ph" style="width:36px"></b><b class="ui"></b><b class="pu" style="width:28px"></b><b style="left:22px;top:39px;width:50px;height:3px;background:#137160"></b><svg style="position:absolute;left:6px;top:16px" width="16" height="27"><use href="#cbx"/></svg></div>
<div class="s" style="left:936px;width:105px"><b class="lp"></b><b class="tl"></b><b class="tp"></b><b class="rp"></b><b class="ph" style="width:38px;background:linear-gradient(120deg,#a08a76,#cdb9a8)"></b><b class="ui"></b><b class="pu" style="left:9px;width:30px"></b><b style="left:22px;top:39px;width:26px;height:3px;background:#137160"></b><b style="left:99px;top:50px;width:4px;height:5px;background:#ddd"></b><svg style="position:absolute;left:6px;top:16px" width="16" height="27"><use href="#cbx"/></svg></div>
<div class="g" style="left:1042px;width:35px;padding-left:5px;box-sizing:border-box">重新</div>
<div class="s" style="left:1079px;top:671px;height:57px;width:26px;background:#f2f3f4;border-radius:2px"><svg style="position:absolute;left:6px;top:15px" width="16" height="27"><use href="#cbx"/></svg></div>

<!-- bottom scroll arrows -->
<svg style="position:absolute;left:1898px;top:1005px" width="20" height="12"><path d="M6 2h7l-3.500 5z" fill="#3a445e"/></svg>
<div style="left:0;top:1015px;width:1920px;height:5px;background:#252d42"></div>

<!-- watermark -->
<span style="left:1512px;top:905px;font-size:57px;line-height:74px;font-weight:500;color:#fff;text-shadow:0 0 2px #000">知乎</span>
<span style="left:1650px;top:902px;font-size:64px;line-height:74px;color:#fff;text-shadow:0 0 2px #000">@</span>
<span style="left:1722px;top:905px;font-size:49px;line-height:68px;color:#fff;text-shadow:0 0 2px #000">田丰瑜</span>
</body></html>
